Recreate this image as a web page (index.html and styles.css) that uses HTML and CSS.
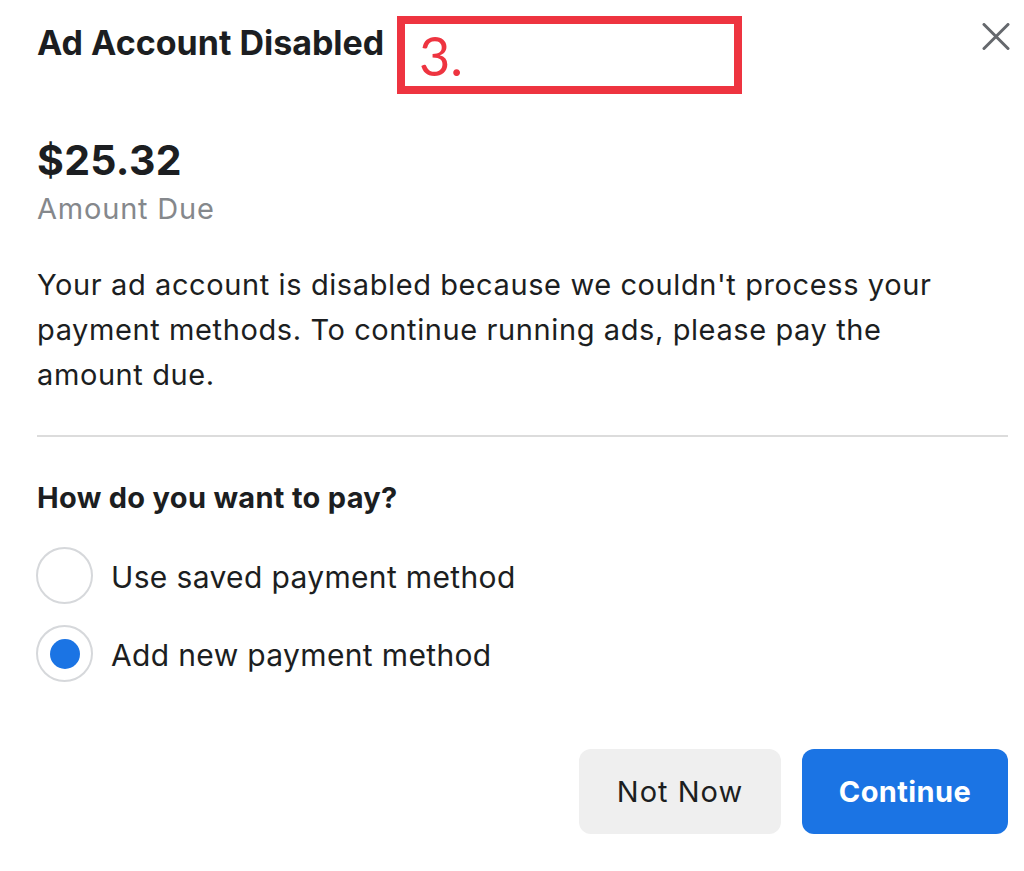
FILE: index.html
```html
<!DOCTYPE html>
<html lang="en">
<head>
  <meta charset="UTF-8">
  <meta name="viewport" content="width=device-width, initial-scale=1.0">
  <title>Ad Account Disabled</title>
  <link rel="stylesheet" href="styles.css">
</head>
<body>
  <div class="dialog">
    <div class="header">
      <h1 class="title">Ad Account Disabled</h1>
      <div class="note">3.</div>
      <button class="close" aria-label="Close">
        <svg width="28" height="27" viewBox="0 0 28 27">
          <path d="M2 1.5 L26 25.5 M26 1.5 L2 25.5" stroke="#65686d" stroke-width="3" stroke-linecap="round" fill="none"/>
        </svg>
      </button>
    </div>

    <div class="amount">$25.32</div>
    <div class="amount-label">Amount Due</div>

    <p class="text">Your ad account is disabled because we couldn't process your payment methods. To continue running ads, please pay the amount due.</p>

    <hr class="divider">

    <div class="question">How do you want to pay?</div>
    <div class="options">
      <label class="option">
        <span class="radio"></span>
        <span class="option-text">Use saved payment method</span>
      </label>
      <label class="option">
        <span class="radio checked"></span>
        <span class="option-text">Add new payment method</span>
      </label>
    </div>

    <div class="actions">
      <button class="btn btn-secondary">Not Now</button>
      <button class="btn btn-primary">Continue</button>
    </div>
  </div>
</body>
</html>
```

FILE: styles.css
```css
body {
  margin: 0;
  background: #fff;
  font-family: Inter, "Liberation Sans", sans-serif;
  color: #1c1e21;
}
.dialog {
  padding: 23px 16px 0 37px;
}
.header {
  position: relative;
  display: flex;
  justify-content: space-between;
  align-items: flex-start;
}
.title {
  margin: 0;
  font-size: 34px;
  line-height: 40px;
  font-weight: 700;
}
/* red annotation box drawn over the screenshot */
.note {
  position: absolute;
  left: 360px;
  top: -7px;
  width: 315px;
  height: 57px;
  padding: 5px 0 0 14px;
  border: 8px solid #ee3440;
  font-family: Lato, "Open Sans", sans-serif;
  font-size: 54px;
  line-height: 54px;
  color: #ee3440;
}
.close {
  background: transparent;
  border: none;
  padding: 0;
  margin-right: -2px;
  line-height: 0;
  cursor: pointer;
}
.amount {
  margin-top: 73px;
  font-size: 41px;
  line-height: 48px;
  font-weight: 700;
  letter-spacing: 0.3px;
}
.amount-label {
  margin-top: 8px;
  font-size: 29px;
  line-height: 34px;
  letter-spacing: 0.8px;
  color: #85888c;
}
.text {
  margin: 36px 0 0;
  max-width: 950px;
  font-size: 29px;
  line-height: 45px;
  letter-spacing: 0.6px;
}
.divider {
  margin: 38px 0 0;
  border: none;
  height: 2px;
  background: #dcdcdc;
}
.question {
  margin-top: 45px;
  font-size: 29px;
  line-height: 32px;
  font-weight: 700;
  letter-spacing: 0.3px;
}
.options {
  margin-top: 33px;
  display: flex;
  flex-direction: column;
  gap: 21px;
}
.option {
  display: flex;
  align-items: center;
  gap: 18px;
  cursor: pointer;
}
.radio {
  width: 57px;
  height: 57px;
  box-sizing: border-box;
  margin-left: -1px;
  border: 2px solid #d6d8db;
  border-radius: 50%;
  display: flex;
  align-items: center;
  justify-content: center;
}
.radio.checked::after {
  content: "";
  width: 30px;
  height: 30px;
  border-radius: 50%;
  background: #1b74e4;
}
.option-text {
  font-size: 30px;
  line-height: 34px;
  padding-top: 2px;
  letter-spacing: 0.35px;
}
.actions {
  margin-top: 67px;
  display: flex;
  justify-content: flex-end;
  gap: 21px;
}
.btn {
  height: 85px;
  border: none;
  border-radius: 12px;
  font-family: Inter, "Liberation Sans", sans-serif;
  font-size: 29px;
  cursor: pointer;
}
.btn-secondary {
  width: 202px;
  background: #efefef;
  color: #1c1e21;
  letter-spacing: 1px;
}
.btn-primary {
  width: 206px;
  background: #1b74e4;
  color: #fff;
  font-weight: 700;
  letter-spacing: 0.4px;
}
```
